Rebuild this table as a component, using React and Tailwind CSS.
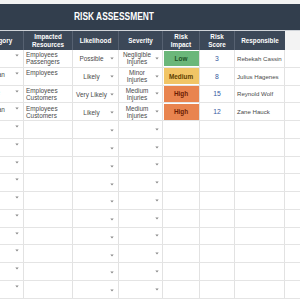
import React from "react";

const rows = [
  { cat: "Fall", res: ["Employees", "Passengers"], like: "Possible", sev: ["Negligible", "Injuries"], impact: "Low", score: 3, who: "Rebekah Cassin" },
  { cat: "Human", res: ["Employees", "\u00a0"], like: "Likely", sev: ["Minor", "Injuries"], impact: "Medium", score: 8, who: "Julius Hagenes" },
  { cat: "Fire", res: ["Employees", "Customers"], like: "Very Likely", sev: ["Medium", "Injuries"], impact: "High", score: 15, who: "Reynold Wolf" },
  { cat: "Human", res: ["Employees", "Customers"], like: "Likely", sev: ["Medium", "Injuries"], impact: "High", score: 12, who: "Zane Hauck" },
];

const empty = Array.from({ length: 10 }, () => null);

const impactStyle = {
  Low: "bg-[#6bb77a] text-[#1d5226]",
  Medium: "bg-[#f1c566] text-[#5c3f00]",
  High: "bg-[#e9844f] text-[#6a1d04]",
};

const Arrow = () => (
  <svg width="4" height="3" viewBox="0 0 4 3" className="shrink-0">
    <path d="M0.3 0.5 L3.7 0.5 L2 2.6 Z" fill="#8a8a8a" />
  </svg>
);

const App = () => {
  return (
    <div
      className="w-[300px] h-[300px] overflow-hidden bg-white"
      style={{ fontFamily: '"Liberation Sans", Arial, sans-serif' }}
    >
      <div className="h-[4px] bg-[#f2f2f2]" />
      <div className="h-[26px] bg-[#323e4d] flex items-center pl-[74px] text-white font-bold text-[10.5px]">
        <span className="origin-left scale-x-[0.8] whitespace-nowrap">RISK ASSESSMENT</span>
      </div>
      <div className="h-[1px] bg-[#cfd3d8]" />

      <div className="ml-[-26px] w-[340px]">
        {/* header row */}
        <div className="flex h-[19px] text-white font-bold text-[6.3px] leading-[7.5px] text-center">
          <div className="w-[50px] flex items-center justify-center bg-[#3c4858] border-r border-[#566171]">Category</div>
          <div className="w-[49px] flex items-center justify-center bg-[#3c4858] border-r border-[#566171]">Impacted<br />Resources</div>
          <div className="w-[46px] flex items-center justify-center bg-[#3c4858] border-r border-[#566171]">Likelihood</div>
          <div className="w-[44px] flex items-center justify-center bg-[#3c4858] border-r border-[#566171]">Severity</div>
          <div className="w-[37px] flex items-center justify-center bg-[#3c4858] border-r border-[#566171]">Risk<br />Impact</div>
          <div className="w-[35px] flex items-center justify-center bg-[#3c4858] border-r border-[#566171]">Risk<br />Score</div>
          <div className="w-[50px] flex items-center justify-center bg-[#3c4858]">Responsible</div>
          <div className="w-[29px] bg-[#f3f3f3]" />
        </div>

        {/* data rows */}
        {rows.map((r, i) => (
          <div key={i} className="flex h-[17.75px] border-b border-[#e4e4e4] text-[6.4px] leading-[7px] text-[#4a4a4a] whitespace-nowrap">
            <div className="w-[50px] flex items-start pt-[3px] pr-[4px] border-r border-[#e2e2e2]">
              <span className="flex-1 text-center">{r.cat}</span>
              <span className="pt-[1px]"><Arrow /></span>
            </div>
            <div className="w-[49px] flex flex-col justify-center pl-[2px] border-r border-[#e2e2e2]">
              <span>{r.res[0]}</span>
              <span>{r.res[1]}</span>
            </div>
            <div className="w-[46px] flex items-center pt-[1px] pr-[4px] border-r border-[#e2e2e2]">
              <span className="flex-1 text-center">{r.like}</span>
              <Arrow />
            </div>
            <div className="w-[44px] flex items-center pr-[3px] border-r border-[#e2e2e2]">
              <span className="flex-1 text-center">{r.sev[0]}<br />{r.sev[1]}</span>
              <Arrow />
            </div>
            <div className="w-[37px] p-[0.5px] border-r border-[#e2e2e2]">
              <div className={`h-full flex items-center justify-center font-bold ${impactStyle[r.impact]}`}>
                {r.impact}
              </div>
            </div>
            <div className="w-[35px] flex items-center justify-center text-[#3559a0] text-[6.8px] border-r border-[#e2e2e2]">
              {r.score}
            </div>
            <div className="w-[50px] flex items-center pl-[2px] border-r border-[#e2e2e2] overflow-hidden text-[6.1px]">{r.who}</div>
            <div className="w-[29px]" />
          </div>
        ))}

        {empty.map((_, i) => (
          <div key={`e${i}`} className="flex h-[17.75px] border-b border-[#e4e4e4]">
            <div className="w-[50px] flex items-start justify-end pt-[4px] pr-[4px] border-r border-[#e2e2e2]">
              <Arrow />
            </div>
            <div className="w-[49px] border-r border-[#e2e2e2]" />
            <div className="w-[46px] flex items-center justify-end pt-[3px] pr-[4px] border-r border-[#e2e2e2]">
              <Arrow />
            </div>
            <div className="w-[44px] flex items-center justify-end pr-[3px] border-r border-[#e2e2e2]">
              <Arrow />
            </div>
            <div className="w-[37px] border-r border-[#e2e2e2]" />
            <div className="w-[35px] border-r border-[#e2e2e2]" />
            <div className="w-[50px] border-r border-[#e2e2e2]" />
            <div className="w-[29px]" />
          </div>
        ))}
      </div>
    </div>
  );
};

export default App;
